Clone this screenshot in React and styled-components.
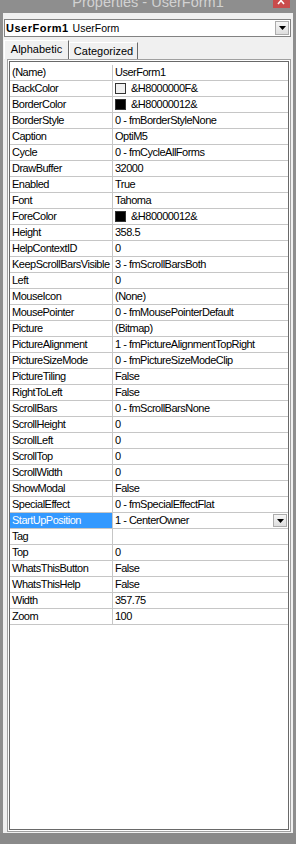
import React from "react";
import styled, { createGlobalStyle } from "styled-components";

const properties = [
  { name: "(Name)", value: "UserForm1" },
  { name: "BackColor", value: "&H8000000F&", swatch: "#f0f0f0" },
  { name: "BorderColor", value: "&H80000012&", swatch: "#000000" },
  { name: "BorderStyle", value: "0 - fmBorderStyleNone" },
  { name: "Caption", value: "OptiM5" },
  { name: "Cycle", value: "0 - fmCycleAllForms" },
  { name: "DrawBuffer", value: "32000" },
  { name: "Enabled", value: "True" },
  { name: "Font", value: "Tahoma" },
  { name: "ForeColor", value: "&H80000012&", swatch: "#000000" },
  { name: "Height", value: "358.5" },
  { name: "HelpContextID", value: "0" },
  { name: "KeepScrollBarsVisible", value: "3 - fmScrollBarsBoth" },
  { name: "Left", value: "0" },
  { name: "MouseIcon", value: "(None)" },
  { name: "MousePointer", value: "0 - fmMousePointerDefault" },
  { name: "Picture", value: "(Bitmap)" },
  { name: "PictureAlignment", value: "1 - fmPictureAlignmentTopRight" },
  { name: "PictureSizeMode", value: "0 - fmPictureSizeModeClip" },
  { name: "PictureTiling", value: "False" },
  { name: "RightToLeft", value: "False" },
  { name: "ScrollBars", value: "0 - fmScrollBarsNone" },
  { name: "ScrollHeight", value: "0" },
  { name: "ScrollLeft", value: "0" },
  { name: "ScrollTop", value: "0" },
  { name: "ScrollWidth", value: "0" },
  { name: "ShowModal", value: "False" },
  { name: "SpecialEffect", value: "0 - fmSpecialEffectFlat" },
  { name: "StartUpPosition", value: "1 - CenterOwner", selected: true },
  { name: "Tag", value: "" },
  { name: "Top", value: "0" },
  { name: "WhatsThisButton", value: "False" },
  { name: "WhatsThisHelp", value: "False" },
  { name: "Width", value: "357.75" },
  { name: "Zoom", value: "100" },
];

function DownArrow() {
  return (
    <svg width="7" height="4" viewBox="0 0 7 4">
      <polygon points="0,0 7,0 3.5,4" fill="#000" />
    </svg>
  );
}

function App() {
  return (
    <>
      <GlobalStyle />
      <Window>
        <TitleBar>
          <TitleText>Properties - UserForm1</TitleText>
          <CloseButton>
            <svg width="17" height="8" viewBox="0 0 17 8">
              <path d="M5 -3 L11 4 M11 -3 L5 4" stroke="#fff" strokeWidth="1.6" />
            </svg>
          </CloseButton>
        </TitleBar>
        <Panel>
          <Combo>
            <ComboName>UserForm1</ComboName>
            <ComboType>UserForm</ComboType>
            <DropButton size={14}>
              <DownArrow />
            </DropButton>
          </Combo>
          <Tabs>
            <Tab selected width={65}>
              Alphabetic
            </Tab>
            <Tab width={69}>Categorized</Tab>
          </Tabs>
          <GridFrame>
            <GridInner>
              {properties.map((p) => (
                <Row key={p.name}>
                  <NameCell selected={p.selected}>{p.name}</NameCell>
                  <ValueCell>
                    {p.swatch && <Swatch color={p.swatch} />}
                    <span>{p.value}</span>
                    {p.selected && (
                      <DropButton size={13}>
                        <DownArrow />
                      </DropButton>
                    )}
                  </ValueCell>
                </Row>
              ))}
            </GridInner>
          </GridFrame>
        </Panel>
        <BottomBar />
      </Window>
    </>
  );
}

const GlobalStyle = createGlobalStyle`
  html, body {
    margin: 0;
    background: #8e8e8e;
    font-family: "Liberation Sans", Arial, sans-serif;
  }
`;

const Window = styled.div`
  width: 296px;
  height: 844px;
  display: flex;
  flex-direction: column;
  background: #8e8e8e;
  overflow: hidden;
`;

const TitleBar = styled.div`
  height: 13px;
  flex-shrink: 0;
  display: flex;
  align-items: flex-start;
  padding-left: 23px;
  overflow: hidden;
`;

const TitleText = styled.div`
  flex: 1;
  text-align: center;
  font-size: 14.5px;
  line-height: 16px;
  margin-top: -6px;
  color: #d2d2d2;
`;

const CloseButton = styled.div`
  width: 17px;
  height: 8px;
  margin-right: 6px;
  background: #c94c4c;
  display: flex;
`;

const Panel = styled.div`
  flex: 1;
  margin: 0 3px;
  padding: 6px 0 1px;
  box-sizing: border-box;
  background: #f0f0f0;
  display: flex;
  flex-direction: column;
  min-height: 0;
`;

const Combo = styled.div`
  margin-left: 1px;
  width: 287px;
  height: 18px;
  box-sizing: border-box;
  border: 1px solid #828282;
  background: #fff;
  display: flex;
  align-items: center;
  padding: 0 1px;
  color: #000;
`;

const ComboName = styled.span`
  font-size: 11px;
  font-weight: bold;
  letter-spacing: 0.5px;
`;

const ComboType = styled.span`
  margin-left: 4px;
  font-size: 10.5px;
`;

const DropButton = styled.div`
  margin-left: auto;
  width: 14px;
  height: ${({ size }) => size}px;
  box-sizing: border-box;
  border: 1px solid #acacac;
  background: linear-gradient(#f6f6f6, #dedede);
  display: flex;
  align-items: center;
  justify-content: center;
`;

const Tabs = styled.div`
  margin-top: 3px;
  height: 19px;
  flex-shrink: 0;
  display: flex;
  align-items: flex-end;
  padding-left: 1px;
`;

const Tab = styled.div`
  width: ${({ width }) => width}px;
  height: ${({ selected }) => (selected ? 19 : 17)}px;
  box-sizing: border-box;
  border-top: 1px solid #fff;
  border-left: 1px solid #fff;
  border-right: 1px solid #6a6a6a;
  font-size: 11px;
  line-height: ${({ selected }) => (selected ? 17 : 16)}px;
  text-align: center;
  color: #000;
`;

const GridFrame = styled.div`
  flex: 1;
  margin-left: 4px;
  width: 284px;
  box-sizing: border-box;
  border: 1px solid #a0a0a0;
  padding: 1px;
  background: #fff;
  display: flex;
  min-height: 0;
`;

const GridInner = styled.div`
  flex: 1;
  border: 1px solid #696969;
  background: #fff;
  padding-top: 3px;
`;

const Row = styled.div`
  display: grid;
  grid-template-columns: 103px 1fr;
  height: 16px;
  box-sizing: border-box;
  border-bottom: 1px solid #c6c6c6;
  font-size: 11px;
  letter-spacing: -0.5px;
  line-height: 15px;
  color: #000;
`;

const NameCell = styled.div`
  padding-left: 2px;
  border-right: 1px solid #c6c6c6;
  white-space: nowrap;
  overflow: hidden;
  background: ${({ selected }) => (selected ? "#3399ff" : "transparent")};
  color: ${({ selected }) => (selected ? "#fff" : "#000")};
`;

const ValueCell = styled.div`
  display: flex;
  align-items: center;
  padding: 0 1px 0 2px;
  white-space: nowrap;
  overflow: hidden;
`;

const Swatch = styled.span`
  width: 11px;
  height: 11px;
  box-sizing: border-box;
  margin-right: 5px;
  background: ${({ color }) => color};
  border: 1px solid #333;
  flex-shrink: 0;
`;

const BottomBar = styled.div`
  height: 11px;
  flex-shrink: 0;
  background: #8a8a8a;
`;

export default App;
